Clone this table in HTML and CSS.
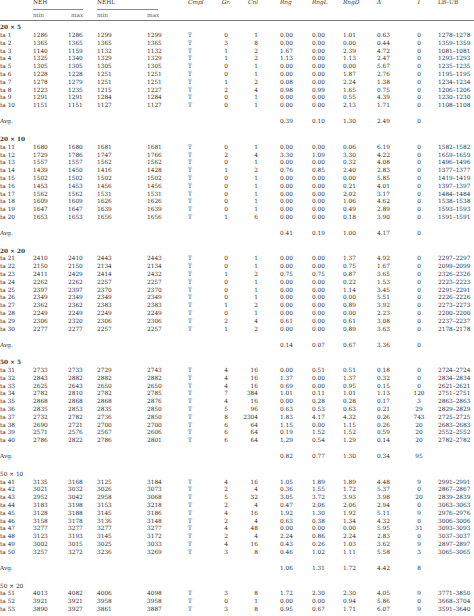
FILE: index.html
```html
<!DOCTYPE html>
<html>
<head>
<meta charset="utf-8">
<link rel="stylesheet" href="styles.css">
</head>
<body>
<div class="tbl">
  <div class="h1">
    <span></span>
    <span class="neh"><span class="u u1">NEH</span></span>
    <span class="nehl"><span class="u u2">NEHL</span></span>
    <span class="it">Cmpl</span>
    <span class="it c">Gr.</span>
    <span class="it rt">Cnl</span>
    <span class="it pl">Rng</span>
    <span class="it">RngL</span>
    <span class="it">RngD</span>
    <span class="it">Δ</span>
    <span class="it c">I</span>
    <span class="lb">LB–UB</span>
  </div>
  <div class="h2">
    <span></span><span>min</span><span class="mx">max</span><span>min</span><span>max</span>
  </div>
  <div class="body">
    <div class="g b">20 × 5</div>
    <div class="r"><span>ta 1</span><span>1286</span><span>1286</span><span>1299</span><span>1299</span><span>T</span><span>0</span><span>1</span><span>0.00</span><span>0.00</span><span>1.01</span><span>0.63</span><span>0</span><span>1278–1278</span></div>
    <div class="r"><span>ta 2</span><span>1365</span><span>1365</span><span>1365</span><span>1365</span><span>T</span><span>3</span><span>8</span><span>0.00</span><span>0.00</span><span>0.00</span><span>0.44</span><span>0</span><span>1359–1359</span></div>
    <div class="r"><span>ta 3</span><span>1140</span><span>1159</span><span>1132</span><span>1132</span><span>T</span><span>1</span><span>2</span><span>1.67</span><span>0.00</span><span>2.39</span><span>4.72</span><span>0</span><span>1081–1081</span></div>
    <div class="r"><span>ta 4</span><span>1325</span><span>1340</span><span>1329</span><span>1329</span><span>T</span><span>1</span><span>2</span><span>1.13</span><span>0.00</span><span>1.13</span><span>2.47</span><span>0</span><span>1293–1293</span></div>
    <div class="r"><span>ta 5</span><span>1305</span><span>1305</span><span>1305</span><span>1305</span><span>T</span><span>0</span><span>1</span><span>0.00</span><span>0.00</span><span>0.00</span><span>5.67</span><span>0</span><span>1235–1235</span></div>
    <div class="r"><span>ta 6</span><span>1228</span><span>1228</span><span>1251</span><span>1251</span><span>T</span><span>0</span><span>1</span><span>0.00</span><span>0.00</span><span>1.87</span><span>2.76</span><span>0</span><span>1195–1195</span></div>
    <div class="r"><span>ta 7</span><span>1278</span><span>1279</span><span>1251</span><span>1251</span><span>T</span><span>1</span><span>2</span><span>0.08</span><span>0.00</span><span>2.24</span><span>1.38</span><span>0</span><span>1234–1234</span></div>
    <div class="r"><span>ta 8</span><span>1223</span><span>1235</span><span>1215</span><span>1227</span><span>T</span><span>2</span><span>4</span><span>0.98</span><span>0.99</span><span>1.65</span><span>0.75</span><span>0</span><span>1206–1206</span></div>
    <div class="r"><span>ta 9</span><span>1291</span><span>1291</span><span>1284</span><span>1284</span><span>T</span><span>0</span><span>1</span><span>0.00</span><span>0.00</span><span>0.55</span><span>4.39</span><span>0</span><span>1230–1230</span></div>
    <div class="r"><span>ta 10</span><span>1151</span><span>1151</span><span>1127</span><span>1127</span><span>T</span><span>0</span><span>1</span><span>0.00</span><span>0.00</span><span>2.13</span><span>1.71</span><span>0</span><span>1108–1108</span></div>
    <div class="r avg"><span>Avg.</span><span></span><span></span><span></span><span></span><span></span><span></span><span></span><span>0.39</span><span>0.10</span><span>1.30</span><span>2.49</span><span>0</span><span></span></div>

    <div class="g b">20 × 10</div>
    <div class="r"><span>ta 11</span><span>1680</span><span>1680</span><span>1681</span><span>1681</span><span>T</span><span>0</span><span>1</span><span>0.00</span><span>0.00</span><span>0.06</span><span>6.19</span><span>0</span><span>1582–1582</span></div>
    <div class="r"><span>ta 12</span><span>1729</span><span>1786</span><span>1747</span><span>1766</span><span>T</span><span>2</span><span>4</span><span>3.30</span><span>1.09</span><span>3.30</span><span>4.22</span><span>0</span><span>1659–1659</span></div>
    <div class="r"><span>ta 13</span><span>1557</span><span>1557</span><span>1562</span><span>1562</span><span>T</span><span>0</span><span>1</span><span>0.00</span><span>0.00</span><span>0.32</span><span>4.08</span><span>0</span><span>1496–1496</span></div>
    <div class="r"><span>ta 14</span><span>1439</span><span>1450</span><span>1416</span><span>1428</span><span>T</span><span>1</span><span>2</span><span>0.76</span><span>0.85</span><span>2.40</span><span>2.83</span><span>0</span><span>1377–1377</span></div>
    <div class="r"><span>ta 15</span><span>1502</span><span>1502</span><span>1502</span><span>1502</span><span>T</span><span>0</span><span>1</span><span>0.00</span><span>0.00</span><span>0.00</span><span>5.85</span><span>0</span><span>1419–1419</span></div>
    <div class="r"><span>ta 16</span><span>1453</span><span>1453</span><span>1456</span><span>1456</span><span>T</span><span>0</span><span>1</span><span>0.00</span><span>0.00</span><span>0.21</span><span>4.01</span><span>0</span><span>1397–1397</span></div>
    <div class="r"><span>ta 17</span><span>1562</span><span>1562</span><span>1531</span><span>1531</span><span>T</span><span>0</span><span>1</span><span>0.00</span><span>0.00</span><span>2.02</span><span>3.17</span><span>0</span><span>1484–1484</span></div>
    <div class="r"><span>ta 18</span><span>1609</span><span>1609</span><span>1626</span><span>1626</span><span>T</span><span>0</span><span>1</span><span>0.00</span><span>0.00</span><span>1.06</span><span>4.62</span><span>0</span><span>1538–1538</span></div>
    <div class="r"><span>ta 19</span><span>1647</span><span>1647</span><span>1639</span><span>1639</span><span>T</span><span>0</span><span>1</span><span>0.00</span><span>0.00</span><span>0.49</span><span>2.89</span><span>0</span><span>1593–1593</span></div>
    <div class="r"><span>ta 20</span><span>1653</span><span>1653</span><span>1656</span><span>1656</span><span>T</span><span>1</span><span>6</span><span>0.00</span><span>0.00</span><span>0.18</span><span>3.90</span><span>0</span><span>1591–1591</span></div>
    <div class="r avg"><span>Avg.</span><span></span><span></span><span></span><span></span><span></span><span></span><span></span><span>0.41</span><span>0.19</span><span>1.00</span><span>4.17</span><span>0</span><span></span></div>

    <div class="g b">20 × 20</div>
    <div class="r"><span>ta 21</span><span>2410</span><span>2410</span><span>2443</span><span>2443</span><span>T</span><span>0</span><span>1</span><span>0.00</span><span>0.00</span><span>1.37</span><span>4.92</span><span>0</span><span>2297–2297</span></div>
    <div class="r"><span>ta 22</span><span>2150</span><span>2150</span><span>2134</span><span>2134</span><span>T</span><span>0</span><span>1</span><span>0.00</span><span>0.00</span><span>0.75</span><span>1.67</span><span>0</span><span>2099–2099</span></div>
    <div class="r"><span>ta 23</span><span>2411</span><span>2429</span><span>2414</span><span>2432</span><span>T</span><span>1</span><span>2</span><span>0.75</span><span>0.75</span><span>0.87</span><span>3.65</span><span>0</span><span>2326–2326</span></div>
    <div class="r"><span>ta 24</span><span>2262</span><span>2262</span><span>2257</span><span>2257</span><span>T</span><span>0</span><span>1</span><span>0.00</span><span>0.00</span><span>0.22</span><span>1.53</span><span>0</span><span>2223–2223</span></div>
    <div class="r"><span>ta 25</span><span>2397</span><span>2397</span><span>2370</span><span>2370</span><span>T</span><span>0</span><span>1</span><span>0.00</span><span>0.00</span><span>1.14</span><span>3.45</span><span>0</span><span>2291–2291</span></div>
    <div class="r"><span>ta 26</span><span>2349</span><span>2349</span><span>2349</span><span>2349</span><span>T</span><span>0</span><span>1</span><span>0.00</span><span>0.00</span><span>0.00</span><span>5.51</span><span>0</span><span>2226–2226</span></div>
    <div class="r"><span>ta 27</span><span>2362</span><span>2362</span><span>2383</span><span>2383</span><span>T</span><span>1</span><span>2</span><span>0.00</span><span>0.00</span><span>0.89</span><span>3.92</span><span>0</span><span>2273–2273</span></div>
    <div class="r"><span>ta 28</span><span>2249</span><span>2249</span><span>2249</span><span>2249</span><span>T</span><span>0</span><span>1</span><span>0.00</span><span>0.00</span><span>0.00</span><span>2.23</span><span>0</span><span>2200–2200</span></div>
    <div class="r"><span>ta 29</span><span>2306</span><span>2320</span><span>2306</span><span>2306</span><span>T</span><span>2</span><span>4</span><span>0.61</span><span>0.00</span><span>0.61</span><span>3.08</span><span>0</span><span>2237–2237</span></div>
    <div class="r"><span>ta 30</span><span>2277</span><span>2277</span><span>2257</span><span>2257</span><span>T</span><span>1</span><span>2</span><span>0.00</span><span>0.00</span><span>0.89</span><span>3.63</span><span>0</span><span>2178–2178</span></div>
    <div class="r avg"><span>Avg.</span><span></span><span></span><span></span><span></span><span></span><span></span><span></span><span>0.14</span><span>0.07</span><span>0.67</span><span>3.36</span><span>0</span><span></span></div>

    <div class="g b">50 × 5</div>
    <div class="r"><span>ta 31</span><span>2733</span><span>2733</span><span>2729</span><span>2743</span><span>T</span><span>4</span><span>16</span><span>0.00</span><span>0.51</span><span>0.51</span><span>0.18</span><span>0</span><span>2724–2724</span></div>
    <div class="r"><span>ta 32</span><span>2843</span><span>2882</span><span>2882</span><span>2882</span><span>T</span><span>4</span><span>16</span><span>1.37</span><span>0.00</span><span>1.37</span><span>0.32</span><span>0</span><span>2834–2834</span></div>
    <div class="r"><span>ta 33</span><span>2625</span><span>2643</span><span>2650</span><span>2650</span><span>T</span><span>4</span><span>16</span><span>0.69</span><span>0.00</span><span>0.95</span><span>0.15</span><span>0</span><span>2621–2621</span></div>
    <div class="r"><span>ta 34</span><span>2782</span><span>2810</span><span>2782</span><span>2785</span><span>T</span><span>7</span><span>384</span><span>1.01</span><span>0.11</span><span>1.01</span><span>1.13</span><span>120</span><span>2751–2751</span></div>
    <div class="r"><span>ta 35</span><span>2868</span><span>2868</span><span>2868</span><span>2876</span><span>T</span><span>4</span><span>16</span><span>0.00</span><span>0.28</span><span>0.28</span><span>0.17</span><span>3</span><span>2863–2863</span></div>
    <div class="r"><span>ta 36</span><span>2835</span><span>2853</span><span>2835</span><span>2850</span><span>T</span><span>5</span><span>96</span><span>0.63</span><span>0.53</span><span>0.63</span><span>0.21</span><span>29</span><span>2829–2829</span></div>
    <div class="r"><span>ta 37</span><span>2732</span><span>2782</span><span>2736</span><span>2850</span><span>T</span><span>8</span><span>2304</span><span>1.83</span><span>4.17</span><span>4.32</span><span>0.26</span><span>743</span><span>2725–2725</span></div>
    <div class="r"><span>ta 38</span><span>2690</span><span>2721</span><span>2700</span><span>2700</span><span>T</span><span>6</span><span>64</span><span>1.15</span><span>0.00</span><span>1.15</span><span>0.26</span><span>20</span><span>2683–2683</span></div>
    <div class="r"><span>ta 39</span><span>2571</span><span>2576</span><span>2567</span><span>2606</span><span>T</span><span>6</span><span>64</span><span>0.19</span><span>1.52</span><span>1.52</span><span>0.59</span><span>20</span><span>2552–2552</span></div>
    <div class="r"><span>ta 40</span><span>2786</span><span>2822</span><span>2786</span><span>2801</span><span>T</span><span>6</span><span>64</span><span>1.29</span><span>0.54</span><span>1.29</span><span>0.14</span><span>20</span><span>2782–2782</span></div>
    <div class="r avg"><span>Avg.</span><span></span><span></span><span></span><span></span><span></span><span></span><span></span><span>0.82</span><span>0.77</span><span>1.30</span><span>0.34</span><span>95</span><span></span></div>

    <div class="g">50 × 10</div>
    <div class="r"><span>ta 41</span><span>3135</span><span>3168</span><span>3125</span><span>3184</span><span>T</span><span>4</span><span>16</span><span>1.05</span><span>1.89</span><span>1.89</span><span>4.48</span><span>9</span><span>2991–2991</span></div>
    <div class="r"><span>ta 42</span><span>3021</span><span>3032</span><span>3026</span><span>3073</span><span>T</span><span>2</span><span>4</span><span>0.36</span><span>1.55</span><span>1.72</span><span>5.37</span><span>0</span><span>2867–2867</span></div>
    <div class="r"><span>ta 43</span><span>2952</span><span>3042</span><span>2958</span><span>3068</span><span>T</span><span>5</span><span>32</span><span>3.05</span><span>3.72</span><span>3.93</span><span>3.98</span><span>20</span><span>2839–2839</span></div>
    <div class="r"><span>ta 44</span><span>3183</span><span>3198</span><span>3153</span><span>3218</span><span>T</span><span>2</span><span>4</span><span>0.47</span><span>2.06</span><span>2.06</span><span>2.94</span><span>0</span><span>3063–3063</span></div>
    <div class="r"><span>ta 45</span><span>3128</span><span>3188</span><span>3145</span><span>3186</span><span>T</span><span>4</span><span>16</span><span>1.92</span><span>1.30</span><span>1.92</span><span>5.11</span><span>9</span><span>2976–2976</span></div>
    <div class="r"><span>ta 46</span><span>3158</span><span>3178</span><span>3136</span><span>3148</span><span>T</span><span>2</span><span>4</span><span>0.63</span><span>0.38</span><span>1.34</span><span>4.32</span><span>0</span><span>3006–3006</span></div>
    <div class="r"><span>ta 47</span><span>3277</span><span>3277</span><span>3277</span><span>3277</span><span>T</span><span>4</span><span>48</span><span>0.00</span><span>0.00</span><span>0.00</span><span>5.95</span><span>31</span><span>3093–3093</span></div>
    <div class="r"><span>ta 48</span><span>3123</span><span>3193</span><span>3145</span><span>3172</span><span>T</span><span>2</span><span>4</span><span>2.24</span><span>0.86</span><span>2.24</span><span>2.83</span><span>0</span><span>3037–3037</span></div>
    <div class="r"><span>ta 49</span><span>3002</span><span>3015</span><span>3025</span><span>3033</span><span>T</span><span>4</span><span>16</span><span>0.43</span><span>0.26</span><span>1.03</span><span>3.62</span><span>9</span><span>2897–2897</span></div>
    <div class="r"><span>ta 50</span><span>3257</span><span>3272</span><span>3236</span><span>3269</span><span>T</span><span>3</span><span>8</span><span>0.46</span><span>1.02</span><span>1.11</span><span>5.58</span><span>3</span><span>3065–3065</span></div>
    <div class="r avg"><span>Avg.</span><span></span><span></span><span></span><span></span><span></span><span></span><span></span><span>1.06</span><span>1.31</span><span>1.72</span><span>4.42</span><span>8</span><span></span></div>

    <div class="g">50 × 20</div>
    <div class="r"><span>ta 51</span><span>4013</span><span>4082</span><span>4006</span><span>4098</span><span>T</span><span>3</span><span>8</span><span>1.72</span><span>2.30</span><span>2.30</span><span>4.05</span><span>9</span><span>3771–3850</span></div>
    <div class="r"><span>ta 52</span><span>3921</span><span>3921</span><span>3958</span><span>3958</span><span>T</span><span>0</span><span>1</span><span>0.00</span><span>0.00</span><span>0.94</span><span>5.86</span><span>0</span><span>3668–3704</span></div>
    <div class="r"><span>ta 53</span><span>3890</span><span>3927</span><span>3861</span><span>3887</span><span>T</span><span>3</span><span>8</span><span>0.95</span><span>0.67</span><span>1.71</span><span>6.07</span><span>9</span><span>3591–3640</span></div>
  </div>
</div>
</body>
</html>
```

FILE: styles.css
```css
html, body {
  margin: 0;
  padding: 0;
  background: #ffffff;
}

body {
  width: 474px;
  height: 616px;
  overflow: hidden;
  font-family: "DejaVu Serif", "Liberation Serif", serif;
  font-size: 5.8px;
  color: #333333;
}

.tbl {
  width: 474px;
}

.h1, .h2, .r {
  display: grid;
  grid-template-columns: 33px 35px 29px 50px 41px 28px 20px 22px 54px 31px 34px 32px 20px 45px;
  white-space: nowrap;
}

.h1 {
  height: 10px;
  line-height: 5px;
}

.neh { grid-column: 2 / 4; }
.nehl { grid-column: 4 / 6; }

.u {
  display: block;
  height: 9px;
  border-bottom: 1px solid #8a8a8a;
}
.u1 { width: 50px; }
.u2 { width: 61px; }

.it { font-style: italic; }
.c { text-align: center; }
.rt { text-align: right; }
.pl { padding-left: 22px; }
.lb { padding-left: 9px; }

.h2 {
  height: 10px;
  line-height: 10px;
  border-bottom: 1px solid #7a7a7a;
  color: #666666;
}
.h2 .mx { padding-left: 3px; }

.body {
  padding-top: 3.3px;
}

.g {
  height: 7.8px;
  line-height: 7.8px;
  margin-top: 9.9px;
  white-space: nowrap;
}
.body > .g:first-child { margin-top: 0; }
.g.b { font-weight: bold; }

.r {
  height: 7.8px;
  line-height: 7.8px;
}
.r > :nth-child(7),
.r > :nth-child(13) { text-align: center; }
.r > :nth-child(8) { text-align: right; }
.r > :nth-child(9) { padding-left: 22px; }
.r > :nth-child(14) { padding-left: 9px; }

.r.avg {
  margin-top: 8.2px;
}
```
